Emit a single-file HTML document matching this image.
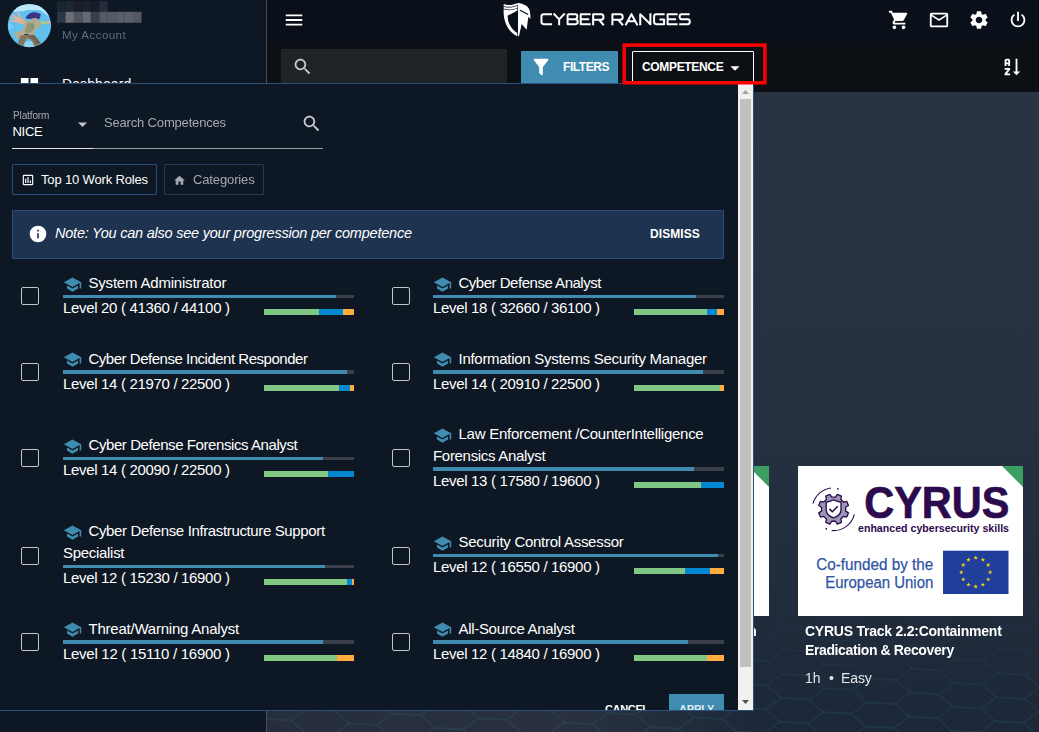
<!DOCTYPE html>
<html>
<head>
<meta charset="utf-8">
<title>Cyber Ranges</title>
<style>
*{box-sizing:border-box;margin:0;padding:0}
html,body{width:1039px;height:732px;overflow:hidden;background:#0e1824;font-family:"Liberation Sans",sans-serif;color:#fff}
.a{position:absolute;white-space:nowrap}
#side{position:absolute;left:0;top:0;width:267px;height:732px;background:#0e1824;border-right:1px solid #464d59}
#top{position:absolute;left:267px;top:0;width:772px;height:42px;background:#0a1019}
#tool{position:absolute;left:267px;top:42px;width:772px;height:50px;background:#0c0f13}
#content{position:absolute;left:267px;top:92px;width:772px;height:640px;background:linear-gradient(180deg,#293343 0%,#273141 45%,#222d3d 72%,#1c2839 100%);overflow:hidden}
#pop{position:absolute;left:0;top:83px;width:738px;height:628px;background:#0e1824;overflow:hidden}
#pop:before{content:"";position:absolute;left:0;top:0;width:100%;height:1px;background:#2d4f7c}
#pop:after{content:"";position:absolute;left:0;bottom:0;width:100%;height:1px;background:#2d4f7c}
#sb{position:absolute;left:738px;top:84px;width:16px;height:627px;background:#f1f1f1;border-right:1px solid #2d4f7c;border-bottom:1px solid #2d4f7c}
#sb .th{position:absolute;left:2px;top:15px;width:11px;height:568px;background:#c1c1c1}

svg{position:absolute;display:block}
.ic{fill:#fff}
#filters{position:absolute;left:254px;top:9px;width:97px;height:34px;background:#3f8cb0;border-radius:1px 1px 0 0}
#comp{position:absolute;left:365px;top:9px;width:122px;height:34px;border:1px solid #fff;border-radius:1px}
#sinput{position:absolute;left:14px;top:7px;width:226px;height:40px;background:#1f2226}
.btxt{font-weight:bold;font-size:12px;letter-spacing:-0.45px}

.g{color:#a3a9b1}
.tbtn{position:absolute;top:81px;height:31px;border:1px solid #2a4d7a;border-radius:1px}

.t{font-size:15px;line-height:22px}
.cap{fill:#3f8cb0}
.cb{position:absolute;width:18px;height:18px;border:1.5px solid #c4c7ca;border-radius:2px}
.pb{position:absolute;width:291px;height:3px;background:#3a3f49}
.pb i{display:block;height:100%;background:#3f8cb0}
.cbar{position:absolute;width:90px;height:6px;display:flex}
.cbar i{display:block;height:6px;flex:none}
.ct{font-size:14px;font-weight:bold;line-height:20px;will-change:transform}
</style>
</head>
<body>
<div id="side">
<svg id="avatar" style="left:4px;top:0" width="52" height="52" viewBox="0 0 732 732">
<defs><clipPath id="avc"><circle cx="358" cy="360" r="305"/></clipPath><filter id="bl" x="-10%" y="-10%" width="120%" height="120%"><feGaussianBlur stdDeviation="5"/></filter></defs>
<g clip-path="url(#avc)"><rect x="40" y="40" width="650" height="650" fill="#60c0ee"/>
<g filter="url(#bl)">
<path d="M120,150 C200,60 330,40 470,70 C560,100 620,170 650,250 C600,200 560,180 520,150 C470,130 430,150 380,140 C330,120 280,170 240,160 C200,150 160,180 120,150Z" fill="#b9e4f7"/>
<path d="M150,90 L560,90 L600,140 L130,140Z" fill="#c4e9f9" opacity="0.700"/>
<path d="M280,600 C330,570 400,580 440,600 L430,670 L290,670Z" fill="#8fd4f4"/>
<path d="M60,330 C90,320 120,340 130,380 L70,420Z" fill="#7fcdf2"/>
<path d="M305,258 C315,215 360,180 410,172 C460,170 505,185 522,205 L500,238 L518,232 C510,255 495,268 480,275 C460,255 430,250 405,262 C375,268 335,270 305,258Z" fill="#3a3585"/>
<path d="M405,262 C430,248 462,250 476,268 C482,295 462,325 440,338 C418,335 400,315 405,262Z" fill="#c99c88"/>
<path d="M165,255 C200,240 250,245 290,280 C320,300 345,330 350,345 L300,350 C260,340 200,330 170,310Z" fill="#dfb19c"/>
<g stroke="#e2b4a0" stroke-width="22" stroke-linecap="round" fill="none"><path d="M185,272 L100,246"/><path d="M195,255 L125,212"/><path d="M232,250 L198,182"/><path d="M180,297 L92,297"/></g>
<path d="M300,292 C340,280 420,295 500,300 L618,292 L628,330 L520,348 C500,380 470,410 440,425 L425,500 L335,482 L175,545 L138,472 L262,420 C280,380 290,340 300,292Z" fill="#b3ad90"/>
<path d="M330,320 C360,310 400,330 420,350 L400,440 L340,470 L290,440Z" fill="#97957a"/>
<path d="M385,330 C405,325 425,335 432,350 L418,420 L380,430Z" fill="#7e9776"/>
<path d="M520,300 L610,292 L622,330 L522,345Z" fill="#a9c39a"/>
<path d="M622,298 C645,292 662,305 660,320 C655,335 635,335 625,330Z" fill="#e0b39e"/>
<path d="M288,478 L342,478 L342,496 L288,496Z" fill="#2b2b2b"/>
<path d="M232,500 C290,490 370,488 422,490 C450,520 490,570 522,612 L430,655 C415,620 395,580 378,560 C360,548 340,545 322,542 C305,575 285,610 270,645 L195,612 C205,570 218,535 232,500Z" fill="#87765f"/>
<path d="M330,500 C360,495 400,495 422,492 C450,525 480,560 510,600 L470,625 C440,580 400,540 330,500Z" fill="#6f624f"/>
</g></g>
</svg>
<svg id="nameblk" style="left:0;top:0" width="150" height="30" viewBox="0 0 1039 207.800"><rect transform="scale(6.927)" x="57.00" y="1.2" width="8.500" height="10.600" fill="rgb(28, 36, 48)"/><rect transform="scale(6.927)" x="65.45" y="1.2" width="8.500" height="10.600" fill="rgb(30, 40, 52)"/><rect transform="scale(6.927)" x="73.90" y="1.2" width="8.500" height="10.600" fill="rgb(27, 30, 42)"/><rect transform="scale(6.927)" x="82.35" y="1.2" width="8.500" height="10.600" fill="rgb(28, 34, 46)"/><rect transform="scale(6.927)" x="90.80" y="1.2" width="8.500" height="10.600" fill="rgb(20, 30, 45)"/><rect transform="scale(6.927)" x="99.25" y="1.2" width="8.500" height="10.600" fill="rgb(38, 44, 58)"/><rect transform="scale(6.927)" x="57.00" y="11.800" width="8.500" height="11" fill="rgb(42, 55, 70)"/><rect transform="scale(6.927)" x="65.45" y="11.800" width="8.500" height="11" fill="rgb(108, 110, 115)"/><rect transform="scale(6.927)" x="73.90" y="11.800" width="8.500" height="11" fill="rgb(80, 85, 97)"/><rect transform="scale(6.927)" x="82.35" y="11.800" width="8.500" height="11" fill="rgb(100, 106, 118)"/><rect transform="scale(6.927)" x="90.80" y="11.800" width="8.500" height="11" fill="rgb(58, 62, 75)"/><rect transform="scale(6.927)" x="99.25" y="11.800" width="8.500" height="11" fill="rgb(85, 90, 103)"/><rect transform="scale(6.927)" x="107.70" y="11.800" width="8.500" height="11" fill="rgb(85, 90, 103)"/><rect transform="scale(6.927)" x="116.15" y="11.800" width="8.500" height="11" fill="rgb(90, 94, 106)"/><rect transform="scale(6.927)" x="124.60" y="11.800" width="8.500" height="11" fill="rgb(92, 96, 108)"/><rect transform="scale(6.927)" x="133.05" y="11.800" width="8.500" height="11" fill="rgb(85, 88, 100)"/></svg>
<span class="a" style="left:62px;top:28px;font-size:11.6px;color:#5f6b80;letter-spacing:0.42px;will-change:transform">My Account</span>
<svg class="ic" style="left:18.100px;top:75.300px" width="23" height="23" viewBox="0 0 24 24"><path d="M13,3V9H21V3M13,21H21V11H13M3,21H11V15H3M3,13H11V3H3V13Z"/></svg>
<span class="a" style="left:62px;top:76.400px;font-size:14px;letter-spacing:0.1px">Dashboard</span>
</div>
<div id="top">
<svg class="ic" style="left:16px;top:9px" width="22" height="22" viewBox="0 0 24 24"><path d="M3 18h18v-2H3v2zm0-5h18v-2H3v2zm0-7v2h18V6H3z"/></svg>
<svg id="logo" style="left:229px;top:0" width="50" height="40" viewBox="0 0 915 732"><g fill="#fff">
<path d="M140,72 C210,105 310,95 400,55 L400,92 C320,128 220,138 140,108 Z"/>
<path d="M140,122 C220,152 320,140 392,106 L392,140 C320,175 220,185 140,156 Z"/>
<path d="M140,168 C230,200 330,185 390,152 L390,190 C330,235 262,255 216,285 C205,400 270,530 390,605 L390,665 C220,580 130,400 140,168 Z"/>
<path d="M403,56 C500,68 590,110 612,180 C628,230 632,300 628,348 L592,305 L560,545 L470,440 L420,662 L403,662 Z"/></g>
<path d="M440,188 L588,266" stroke="#0a1019" stroke-width="24" fill="none"/></svg>
<svg id="brand" style="left:269px;top:4px" width="160" height="32" viewBox="0 0 1039 208"><g fill="none" stroke="#fff" stroke-width="13" stroke-linejoin="round" transform="translate(0,60)">
<g transform="translate(28,0)"><path d="M76,7 H22 Q7,7 7,22 V56 Q7,71 22,71 H76"/></g>
<g transform="translate(110,0)"><path d="M4,2 L40,40 L76,2 M40,40 V78"/></g>
<g transform="translate(198,0)"><path d="M7,7 H58 Q70,7 70,21 Q70,36 56,39 H7 M56,39 Q73,42 73,56 Q73,71 58,71 H7 V7"/></g>
<g transform="translate(283,0)"><path d="M72,7 H7 V71 H72 M7,39 H62"/></g>
<g transform="translate(364,0)"><path d="M7,78 V7 H60 Q74,7 74,24 Q74,42 60,42 H7 M44,42 L76,78"/></g>
<g transform="translate(489,0)"><path d="M7,78 V7 H60 Q74,7 74,24 Q74,42 60,42 H7 M44,42 L76,78"/></g>
<g transform="translate(578,0)"><path d="M3,78 L42,6 L81,78 M18,52 H66"/></g>
<g transform="translate(670,0)"><path d="M7,78 V6 L73,72 V0"/></g>
<g transform="translate(760,0)"><path d="M76,7 H22 Q7,7 7,22 V56 Q7,71 22,71 H72 V40 H42"/></g>
<g transform="translate(848,0)"><path d="M72,7 H7 V71 H72 M7,39 H62"/></g>
<g transform="translate(926,0)"><path d="M72,7 H20 Q7,7 7,22 Q7,39 20,39 H60 Q73,39 73,55 Q73,71 60,71 H4"/></g>
</g></svg>
<svg class="ic" style="left:620.500px;top:9px" width="22" height="22" viewBox="0 0 24 24"><path d="M7 18c-1.1 0-1.99.9-1.99 2S5.9 22 7 22s2-.9 2-2-.9-2-2-2zM1 2v2h2l3.6 7.59-1.35 2.45c-.16.28-.25.61-.25.96 0 1.1.9 2 2 2h12v-2H7.42c-.14 0-.25-.11-.25-.25l.03-.12.9-1.63h7.45c.75 0 1.41-.41 1.75-1.03l3.58-6.49c.08-.14.12-.31.12-.48 0-.55-.45-1-1-1H5.21l-.94-2H1zm16 16c-1.1 0-1.99.9-1.99 2s.89 2 1.99 2 2-.9 2-2-.9-2-2-2z"/></svg>
<svg class="ic" style="left:661px;top:9px" width="22" height="22" viewBox="0 0 24 24"><path d="M20 4H4c-1.1 0-1.99.9-1.99 2L2 18c0 1.1.9 2 2 2h16c1.1 0 2-.9 2-2V6c0-1.1-.9-2-2-2zm0 14H4V8l8 5 8-5v10zm-8-7L4 6h16l-8 5z"/></svg>
<svg class="ic" style="left:701px;top:9px" width="22" height="22" viewBox="0 0 24 24"><path d="M19.14 12.94c.04-.3.06-.61.06-.94 0-.32-.02-.64-.07-.94l2.03-1.58c.18-.14.23-.41.12-.61l-1.92-3.32c-.12-.22-.37-.29-.59-.22l-2.39.96c-.5-.38-1.03-.7-1.62-.94l-.36-2.54c-.04-.24-.24-.41-.48-.41h-3.84c-.24 0-.43.17-.47.41l-.36 2.54c-.59.24-1.13.57-1.62.94l-2.39-.96c-.22-.08-.47 0-.59.22L2.74 8.87c-.12.21-.08.47.12.61l2.03 1.58c-.05.3-.09.63-.09.94s.02.64.07.94l-2.03 1.58c-.18.14-.23.41-.12.61l1.92 3.32c.12.22.37.29.59.22l2.39-.96c.5.38 1.03.7 1.62.94l.36 2.54c.05.24.24.41.48.41h3.84c.24 0 .44-.17.47-.41l.36-2.54c.59-.24 1.13-.56 1.62-.94l2.39.96c.22.08.47 0 .59-.22l1.92-3.32c.12-.22.07-.47-.12-.61l-2.01-1.58zM12 15.6c-1.98 0-3.6-1.62-3.6-3.6s1.62-3.6 3.6-3.6 3.6 1.62 3.6 3.6-1.62 3.6-3.6 3.6z"/></svg>
<svg class="ic" style="left:739.900px;top:8.700px" width="22" height="22" viewBox="0 0 24 24"><path d="M16.560,5.440L15.110,6.890C16.840,7.940 18,9.830 18,12A6,6 0 0,1 12,18A6,6 0 0,1 6,12C6,9.830 7.160,7.940 8.880,6.880L7.440,5.440C5.360,6.880 4,9.280 4,12A8,8 0 0,0 12,20A8,8 0 0,0 20,12C20,9.280 18.640,6.880 16.560,5.440M13,3H11V13H13"/></svg>
</div>
<div id="tool">
<div id="sinput"><svg style="left:10.600px;top:7.400px" width="21.300" height="21.300" viewBox="0 0 24 24"><path fill="#c9cacb" d="M15.5 14h-.79l-.28-.27C15.41 12.59 16 11.11 16 9.500 16 5.910 13.090 3 9.500 3S3 5.910 3 9.500 5.910 16 9.500 16c1.610 0 3.090-.59 4.230-1.570l.27.28v.79l5 4.990L20.490 19l-4.990-5zm-6 0C7.010 14 5 11.990 5 9.500S7.010 5 9.500 5 14 7.010 14 9.500 11.990 14 9.500 14z"/></svg></div>
<div id="filters"><svg class="ic" style="left:9px;top:5px" width="22" height="22" viewBox="0 0 24 24"><path d="M14,12V19.880C14.040,20.180 13.940,20.500 13.710,20.710C13.320,21.100 12.690,21.100 12.300,20.710L10.290,18.700C10.060,18.470 9.960,18.160 10,17.870V12H9.970L4.210,4.620C3.870,4.190 3.950,3.560 4.380,3.220C4.570,3.080 4.780,3 5,3V3H19V3C19.220,3 19.430,3.080 19.620,3.220C20.050,3.560 20.130,4.190 19.790,4.620L14.030,12H14Z"/></svg><span class="a btxt" style="left:42px;top:9px">FILTERS</span></div>
<div id="comp"><span class="a btxt" style="left:9px;top:8px;letter-spacing:-0.33px">COMPETENCE</span><svg class="ic" style="left:91px;top:5px" width="22" height="22" viewBox="0 0 24 24"><path d="M7 10l5 5 5-5z"/></svg></div>
<svg class="ic" style="left:733px;top:14.300px" width="22" height="22" viewBox="0 0 24 24"><path d="M19 17H22L18 21L14 17H17V3H19M11 13V15L7.670 19H11V21H5V19L8.330 15H5V13M9 3H7C5.900 3 5 3.900 5 5V11H7V9H9V11H11V5C11 3.900 10.110 3 9 3M9 7H7V5H9Z"/></svg>
</div>
<div id="content">
<div class="a" style="left:0;top:619px;width:500px;height:21px;background:linear-gradient(90deg,#262e3d 0%,#29313f 60%,rgba(41,49,63,0) 100%)"></div>
<svg id="hex" style="left:0;top:0" width="772" height="640" viewBox="0 0 772 640"><defs><pattern id="hx" width="86" height="24" patternUnits="userSpaceOnUse" patternTransform="translate(14,3) rotate(3)"><path d="M0,12 L15,0 L43,0 L58,12 L43,24 L15,24 Z M58,12 L86,12" fill="none" stroke="#3a93aa" stroke-width="1"/><circle cx="15" cy="0" r="0.900" fill="#3a93aa"/><circle cx="58" cy="12" r="0.900" fill="#3a93aa"/></pattern><linearGradient id="fd" x1="0" y1="0" x2="0" y2="1"><stop offset="0.700" stop-color="#fff" stop-opacity="0"/><stop offset="0.860" stop-color="#fff" stop-opacity="0.100"/><stop offset="1" stop-color="#fff" stop-opacity="0.260"/></linearGradient><mask id="mk"><rect width="772" height="640" fill="url(#fd)"/></mask></defs><rect width="772" height="640" fill="url(#hx)" mask="url(#mk)"/></svg>
<div class="a card" style="left:277px;top:374px;width:225px;height:150px;background:#fff"><svg style="left:0;top:0" width="225" height="150" viewBox="0 0 225 150"><polygon points="204,0 225,0 225,21" fill="#3d9e63"/></svg></div>
<div class="a card" style="left:531px;top:374px;width:225px;height:150px"><svg style="left:0;top:0" width="225" height="150" viewBox="0 0 225 150">
<rect width="225" height="150" fill="#fff"/>
<polygon points="204,0 225,0 225,21" fill="#3d9e63"/>
<g transform="translate(35.6,43.2)"><path d="M11.86,-2.85 L15.13,-2.27 L15.13,2.27 L11.86,2.85 L10.40,6.37 L12.31,9.09 L9.09,12.31 L6.37,10.40 L2.85,11.86 L2.27,15.13 L-2.27,15.13 L-2.85,11.86 L-6.37,10.40 L-9.09,12.31 L-12.31,9.09 L-10.40,6.37 L-11.86,2.85 L-15.13,2.27 L-15.13,-2.27 L-11.86,-2.85 L-10.40,-6.37 L-12.31,-9.09 L-9.09,-12.31 L-6.37,-10.40 L-2.85,-11.86 L-2.27,-15.13 L2.27,-15.13 L2.85,-11.86 L6.37,-10.40 L9.09,-12.31 L12.31,-9.09 L10.40,-6.37Z" fill="#9c96b2" stroke="#2b0a4d" stroke-width="1.3" stroke-linejoin="round" transform="rotate(22.5)"/>
<path d="M0,-9.500 C2.500,-8 5,-7.300 7.400,-7.200 L7.400,0.500 C7.400,4.500 4,7.200 0,8.600 C-4,7.200 -7.400,4.500 -7.400,0.500 L-7.400,-7.200 C-5,-7.300 -2.500,-8 0,-9.500Z" fill="#fff" stroke="#2b0a4d" stroke-width="1.3"/>
<path d="M-4.200,-0.300 L-1.300,2.500 L4.200,-3" fill="none" stroke="#2b0a4d" stroke-width="1.500"/>
<path d="M-20.67,-5.54 A21.4,21.4 0 0 1 -2.61,-21.24" fill="none" stroke="#2b0a4d" stroke-width="1.100"/>
<path d="M20.76,5.18 A21.4,21.4 0 0 1 -1.87,21.32" fill="none" stroke="#2b0a4d" stroke-width="1.100"/>
<circle cx="4.32" cy="-20.35" r="0.9" fill="#2b0a4d"/><circle cx="-7.35" cy="19.67" r="0.9" fill="#2b0a4d"/></g>
<text x="66.300" y="52" font-family="Liberation Sans" font-weight="bold" font-size="43.600" fill="#2b0a4d" stroke="#2b0a4d" stroke-width="0.700" textLength="145" lengthAdjust="spacingAndGlyphs">CYRUS</text>
<text x="60" y="65.800" font-family="Liberation Sans" font-weight="bold" font-size="11.600" fill="#2b0a4d" textLength="151" lengthAdjust="spacingAndGlyphs">enhanced cybersecurity skills</text>
<text x="135.300" y="103.500" text-anchor="end" font-family="Liberation Sans" font-size="16" fill="#2f55a4" stroke="#2f55a4" stroke-width="0.250" textLength="117" lengthAdjust="spacingAndGlyphs">Co-funded by the</text>
<text x="135.300" y="121.500" text-anchor="end" font-family="Liberation Sans" font-size="16" fill="#2f55a4" stroke="#2f55a4" stroke-width="0.250" textLength="108" lengthAdjust="spacingAndGlyphs">European Union</text>
<rect x="145" y="84.700" width="65.500" height="43.300" fill="#1f3f9b"/>
<polygon points="177.70,89.40 178.26,91.03 179.98,91.06 178.60,92.09 179.11,93.74 177.70,92.75 176.29,93.74 176.80,92.09 175.42,91.06 177.14,91.03" fill="#f7d417"/><polygon points="184.90,91.33 185.46,92.96 187.18,92.99 185.80,94.02 186.31,95.67 184.90,94.68 183.49,95.67 184.00,94.02 182.62,92.99 184.34,92.96" fill="#f7d417"/><polygon points="190.17,96.60 190.73,98.23 192.45,98.26 191.07,99.29 191.58,100.94 190.17,99.95 188.76,100.94 189.27,99.29 187.89,98.26 189.61,98.23" fill="#f7d417"/><polygon points="192.10,103.80 192.66,105.43 194.38,105.46 193.00,106.49 193.51,108.14 192.10,107.15 190.69,108.14 191.20,106.49 189.82,105.46 191.54,105.43" fill="#f7d417"/><polygon points="190.17,111.00 190.73,112.63 192.45,112.66 191.07,113.69 191.58,115.34 190.17,114.35 188.76,115.34 189.27,113.69 187.89,112.66 189.61,112.63" fill="#f7d417"/><polygon points="184.90,116.27 185.46,117.90 187.18,117.93 185.80,118.96 186.31,120.61 184.90,119.62 183.49,120.61 184.00,118.96 182.62,117.93 184.34,117.90" fill="#f7d417"/><polygon points="177.70,118.20 178.26,119.83 179.98,119.86 178.60,120.89 179.11,122.54 177.70,121.55 176.29,122.54 176.80,120.89 175.42,119.86 177.14,119.83" fill="#f7d417"/><polygon points="170.50,116.27 171.06,117.90 172.78,117.93 171.40,118.96 171.91,120.61 170.50,119.62 169.09,120.61 169.60,118.96 168.22,117.93 169.94,117.90" fill="#f7d417"/><polygon points="165.23,111.00 165.79,112.63 167.51,112.66 166.13,113.69 166.64,115.34 165.23,114.35 163.82,115.34 164.33,113.69 162.95,112.66 164.67,112.63" fill="#f7d417"/><polygon points="163.30,103.80 163.86,105.43 165.58,105.46 164.20,106.49 164.71,108.14 163.30,107.15 161.89,108.14 162.40,106.49 161.02,105.46 162.74,105.43" fill="#f7d417"/><polygon points="165.23,96.60 165.79,98.23 167.51,98.26 166.13,99.29 166.64,100.94 165.23,99.95 163.82,100.94 164.33,99.29 162.95,98.26 164.67,98.23" fill="#f7d417"/><polygon points="170.50,91.33 171.06,92.96 172.78,92.99 171.40,94.02 171.91,95.67 170.50,94.68 169.09,95.67 169.60,94.02 168.22,92.99 169.94,92.96" fill="#f7d417"/>
</svg></div>
<span class="a ct" style="left:538px;top:529px;letter-spacing:-0.24px">CYRUS Track 2.2:Containment</span>
<span class="a ct" style="left:538px;top:548px;letter-spacing:-0.38px">Eradication &amp; Recovery</span>
<span class="a" style="left:538px;top:578px;font-size:14px;color:#e3e5e8;will-change:transform">1h</span><span class="a" style="left:561.500px;top:578px;font-size:14px;color:#e3e5e8;will-change:transform">•</span><span class="a" style="left:574px;top:578px;font-size:14px;color:#e3e5e8;letter-spacing:-0.1px;will-change:transform">Easy</span>
<span class="a ct" style="left:425.500px;top:529px">Detection</span>
</div>
<div id="pop">
<span class="a g" style="left:12.500px;top:27px;font-size:10px;letter-spacing:-0.12px;will-change:transform">Platform</span>
<span class="a" style="left:12.5px;top:41px;font-size:13px;letter-spacing:-0.3px">NICE</span>
<svg style="left:77.700px;top:39px" width="9" height="5.400" viewBox="0 0 10 6"><path d="M0 0.500h10l-5 5z" fill="#c3c6ca"/></svg>
<div class="a" style="left:12px;top:65px;width:81px;height:1px;background:#e4e5e6"></div>
<div class="a" style="left:93px;top:65px;width:230px;height:1px;background:#9a9fa6"></div>
<span class="a g" style="left:104px;top:32px;font-size:13px;letter-spacing:-0.17px;will-change:transform">Search Competences</span>
<svg style="left:300.800px;top:29.800px" width="21.300" height="21.300" viewBox="0 0 24 24"><path fill="#c9cbce" d="M15.5 14h-.79l-.28-.27C15.41 12.59 16 11.11 16 9.500 16 5.910 13.090 3 9.500 3S3 5.910 3 9.500 5.910 16 9.500 16c1.610 0 3.090-.59 4.230-1.570l.27.28v.79l5 4.990L20.490 19l-4.990-5zm-6 0C7.010 14 5 11.990 5 9.500S7.010 5 9.500 5 14 7.010 14 9.500 11.990 14 9.500 14z"/></svg>
<div class="tbtn" style="left:12px;width:145px"><svg class="ic" style="left:8px;top:8px" width="14" height="14" viewBox="0 0 24 24"><path d="M9 17H7V10H9V17M13 17H11V7H13V17M17 17H15V13H17V17M19 19H5V5H19V19.100M19 3H5C3.900 3 3 3.900 3 5V19C3 20.100 3.900 21 5 21H19C20.100 21 21 20.100 21 19V5C21 3.900 20.100 3 19 3Z"/></svg><span class="a" style="left:28px;top:7px;font-size:13px;letter-spacing:-0.16px">Top 10 Work Roles</span></div>
<div class="tbtn" style="left:164px;width:100px;border-color:#22395a"><svg style="left:8px;top:8.600px" width="13" height="13" viewBox="0 0 24 24"><path fill="#a3a9b1" d="M10,20V14H14V20H19V12H22L12,3L2,12H5V20H10Z"/></svg><span class="a g" style="left:28px;top:7px;font-size:13px;letter-spacing:-0.13px;will-change:transform">Categories</span></div>
<div class="a" id="note" style="left:12px;top:127px;width:712px;height:49px;background:#1e3350;border:1px solid #2c4f7e;border-radius:1px">
<svg class="ic" style="left:15px;top:12.500px" width="20" height="20" viewBox="0 0 24 24"><path d="M13,9H11V7H13M13,17H11V11H13M12,2A10,10 0 0,0 2,12A10,10 0 0,0 12,22A10,10 0 0,0 22,12A10,10 0 0,0 12,2Z"/></svg>
<span class="a" style="left:42px;top:14px;font-size:14.500px;font-style:italic;letter-spacing:-0.225px">Note: You can also see your progression per competence</span>
<span class="a btxt" style="left:637px;top:16px;letter-spacing:0.08px">DISMISS</span></div>
<!--ITEMS-->
<div class="cb" style="left:21px;top:204px"></div>
<div class="a" style="left:63px;top:191.7px"><svg class="cap" style="left:0;top:0" width="19" height="19" viewBox="0 0 24 24"><path d="M12,3L1,9L12,15L21,10.090V17H23V9M5,13.180V17.180L12,21L19,17.180V13.180L12,17L5,13.180Z"/></svg></div>
<span class="a t" style="left:88.5px;top:189px;letter-spacing:-0.201px">System Administrator</span>
<div class="pb" style="left:63px;top:212px;height:3px"><i style="width:93.8%"></i></div>
<span class="a t" style="left:63px;top:214px;letter-spacing:-0.326px">Level 20 ( 41360 / 44100 )</span>
<div class="cbar" style="left:264px;top:226px"><i style="width:55px;background:#81c784"></i><i style="width:24px;background:#0288d1"></i><i style="width:11px;background:#ffab40"></i></div>
<div class="cb" style="left:21px;top:280px"></div>
<div class="a" style="left:63px;top:266.6px"><svg class="cap" style="left:0;top:0" width="19" height="19" viewBox="0 0 24 24"><path d="M12,3L1,9L12,15L21,10.090V17H23V9M5,13.180V17.180L12,21L19,17.180V13.180L12,17L5,13.180Z"/></svg></div>
<span class="a t" style="left:88.5px;top:265px;letter-spacing:-0.481px">Cyber Defense Incident Responder</span>
<div class="pb" style="left:63px;top:287px;height:4px"><i style="width:97.6%"></i></div>
<span class="a t" style="left:63px;top:290px;letter-spacing:-0.326px">Level 14 ( 21970 / 22500 )</span>
<div class="cbar" style="left:264px;top:302px"><i style="width:75.4px;background:#81c784"></i><i style="width:10.6px;background:#0288d1"></i><i style="width:4px;background:#ffab40"></i></div>
<div class="cb" style="left:21px;top:366px"></div>
<div class="a" style="left:63px;top:353.5px"><svg class="cap" style="left:0;top:0" width="19" height="19" viewBox="0 0 24 24"><path d="M12,3L1,9L12,15L21,10.090V17H23V9M5,13.180V17.180L12,21L19,17.180V13.180L12,17L5,13.180Z"/></svg></div>
<span class="a t" style="left:88.5px;top:351px;letter-spacing:-0.419px">Cyber Defense Forensics Analyst</span>
<div class="pb" style="left:63px;top:374px;height:3px"><i style="width:89.3%"></i></div>
<span class="a t" style="left:63px;top:376px;letter-spacing:-0.326px">Level 14 ( 20090 / 22500 )</span>
<div class="cbar" style="left:264px;top:388px"><i style="width:64px;background:#81c784"></i><i style="width:26px;background:#0288d1"></i><i style="width:0px;background:#ffab40"></i></div>
<div class="cb" style="left:21px;top:464px"></div>
<div class="a" style="left:63px;top:439.5px"><svg class="cap" style="left:0;top:0" width="19" height="19" viewBox="0 0 24 24"><path d="M12,3L1,9L12,15L21,10.090V17H23V9M5,13.180V17.180L12,21L19,17.180V13.180L12,17L5,13.180Z"/></svg></div>
<span class="a t" style="left:88.5px;top:437px;letter-spacing:-0.363px">Cyber Defense Infrastructure Support</span>
<span class="a t" style="left:63px;top:459px;letter-spacing:-0.300px">Specialist</span>
<div class="pb" style="left:63px;top:482px;height:3px"><i style="width:90.1%"></i></div>
<span class="a t" style="left:63px;top:484px;letter-spacing:-0.326px">Level 12 ( 15230 / 16900 )</span>
<div class="cbar" style="left:264px;top:496px"><i style="width:82.7px;background:#81c784"></i><i style="width:5.3px;background:#0288d1"></i><i style="width:2px;background:#ffab40"></i></div>
<div class="cb" style="left:21px;top:550px"></div>
<div class="a" style="left:63px;top:536.6px"><svg class="cap" style="left:0;top:0" width="19" height="19" viewBox="0 0 24 24"><path d="M12,3L1,9L12,15L21,10.090V17H23V9M5,13.180V17.180L12,21L19,17.180V13.180L12,17L5,13.180Z"/></svg></div>
<span class="a t" style="left:88.5px;top:535px;letter-spacing:-0.222px">Threat/Warning Analyst</span>
<div class="pb" style="left:63px;top:557px;height:4px"><i style="width:89.4%"></i></div>
<span class="a t" style="left:63px;top:560px;letter-spacing:-0.281px">Level 12 ( 15110 / 16900 )</span>
<div class="cbar" style="left:264px;top:572px"><i style="width:72.9px;background:#81c784"></i><i style="width:0px;background:#0288d1"></i><i style="width:17.1px;background:#ffab40"></i></div>
<div class="cb" style="left:392px;top:204px"></div>
<div class="a" style="left:433px;top:191.7px"><svg class="cap" style="left:0;top:0" width="19" height="19" viewBox="0 0 24 24"><path d="M12,3L1,9L12,15L21,10.090V17H23V9M5,13.180V17.180L12,21L19,17.180V13.180L12,17L5,13.180Z"/></svg></div>
<span class="a t" style="left:458.5px;top:189px;letter-spacing:-0.484px">Cyber Defense Analyst</span>
<div class="pb" style="left:433px;top:212px;height:3px"><i style="width:90.5%"></i></div>
<span class="a t" style="left:433px;top:214px;letter-spacing:-0.326px">Level 18 ( 32660 / 36100 )</span>
<div class="cbar" style="left:634px;top:226px"><i style="width:73.3px;background:#81c784"></i><i style="width:9.7px;background:#0288d1"></i><i style="width:7px;background:#ffab40"></i></div>
<div class="cb" style="left:392px;top:280px"></div>
<div class="a" style="left:433px;top:266.6px"><svg class="cap" style="left:0;top:0" width="19" height="19" viewBox="0 0 24 24"><path d="M12,3L1,9L12,15L21,10.090V17H23V9M5,13.180V17.180L12,21L19,17.180V13.180L12,17L5,13.180Z"/></svg></div>
<span class="a t" style="left:458.5px;top:265px;letter-spacing:-0.284px">Information Systems Security Manager</span>
<div class="pb" style="left:433px;top:287px;height:4px"><i style="width:92.9%"></i></div>
<span class="a t" style="left:433px;top:290px;letter-spacing:-0.326px">Level 14 ( 20910 / 22500 )</span>
<div class="cbar" style="left:634px;top:302px"><i style="width:85.7px;background:#81c784"></i><i style="width:0px;background:#0288d1"></i><i style="width:4.3px;background:#ffab40"></i></div>
<div class="cb" style="left:392px;top:366px"></div>
<div class="a" style="left:433px;top:342.5px"><svg class="cap" style="left:0;top:0" width="19" height="19" viewBox="0 0 24 24"><path d="M12,3L1,9L12,15L21,10.090V17H23V9M5,13.180V17.180L12,21L19,17.180V13.180L12,17L5,13.180Z"/></svg></div>
<span class="a t" style="left:458.5px;top:340px;letter-spacing:-0.260px">Law Enforcement /CounterIntelligence</span>
<span class="a t" style="left:433px;top:362px;letter-spacing:-0.309px">Forensics Analyst</span>
<div class="pb" style="left:433px;top:384px;height:4px"><i style="width:89.7%"></i></div>
<span class="a t" style="left:433px;top:387.0px;letter-spacing:-0.326px">Level 13 ( 17580 / 19600 )</span>
<div class="cbar" style="left:634px;top:399.0px"><i style="width:66.9px;background:#81c784"></i><i style="width:23.1px;background:#0288d1"></i><i style="width:0px;background:#ffab40"></i></div>
<div class="cb" style="left:392px;top:464px"></div>
<div class="a" style="left:433px;top:450.5px"><svg class="cap" style="left:0;top:0" width="19" height="19" viewBox="0 0 24 24"><path d="M12,3L1,9L12,15L21,10.090V17H23V9M5,13.180V17.180L12,21L19,17.180V13.180L12,17L5,13.180Z"/></svg></div>
<span class="a t" style="left:458.5px;top:448px;letter-spacing:-0.272px">Security Control Assessor</span>
<div class="pb" style="left:433px;top:471px;height:3px"><i style="width:97.9%"></i></div>
<span class="a t" style="left:433px;top:473px;letter-spacing:-0.326px">Level 12 ( 16550 / 16900 )</span>
<div class="cbar" style="left:634px;top:485px"><i style="width:50.7px;background:#81c784"></i><i style="width:25.3px;background:#0288d1"></i><i style="width:14px;background:#ffab40"></i></div>
<div class="cb" style="left:392px;top:550px"></div>
<div class="a" style="left:433px;top:536.6px"><svg class="cap" style="left:0;top:0" width="19" height="19" viewBox="0 0 24 24"><path d="M12,3L1,9L12,15L21,10.090V17H23V9M5,13.180V17.180L12,21L19,17.180V13.180L12,17L5,13.180Z"/></svg></div>
<span class="a t" style="left:458.5px;top:535px;letter-spacing:-0.314px">All-Source Analyst</span>
<div class="pb" style="left:433px;top:557px;height:4px"><i style="width:87.8%"></i></div>
<span class="a t" style="left:433px;top:560px;letter-spacing:-0.326px">Level 12 ( 14840 / 16900 )</span>
<div class="cbar" style="left:634px;top:572px"><i style="width:72.5px;background:#81c784"></i><i style="width:0px;background:#0288d1"></i><i style="width:17.5px;background:#ffab40"></i></div>
<!--/ITEMS-->
<span class="a btxt" style="left:605px;top:620px;font-size:11px;letter-spacing:-0.35px">CANCEL</span>
<div class="a" style="left:669px;top:611px;width:55px;height:30px;background:#3f8cb0"><span class="a btxt" style="left:10px;top:9px;font-size:11px;letter-spacing:-0.1px;color:#dfeaf0">APPLY</span></div>
</div>
<svg id="red" style="left:618px;top:40px;z-index:20" width="154" height="50" viewBox="618 40 154 50"><rect x="624.250" y="45.100" width="140.650" height="37.650" fill="none" stroke="#ff0000" stroke-width="3.500"/></svg>
<div id="sb"><div class="th"></div><svg style="left:4px;top:6px" width="7" height="4" viewBox="0 0 7 4"><path d="M0 4L3.500 0L7 4z" fill="#a3a3a3"/></svg><svg style="left:4px;top:616px" width="7" height="4" viewBox="0 0 7 4"><path d="M0 0L3.500 4L7 0z" fill="#505050"/></svg></div>
</body>
</html>
